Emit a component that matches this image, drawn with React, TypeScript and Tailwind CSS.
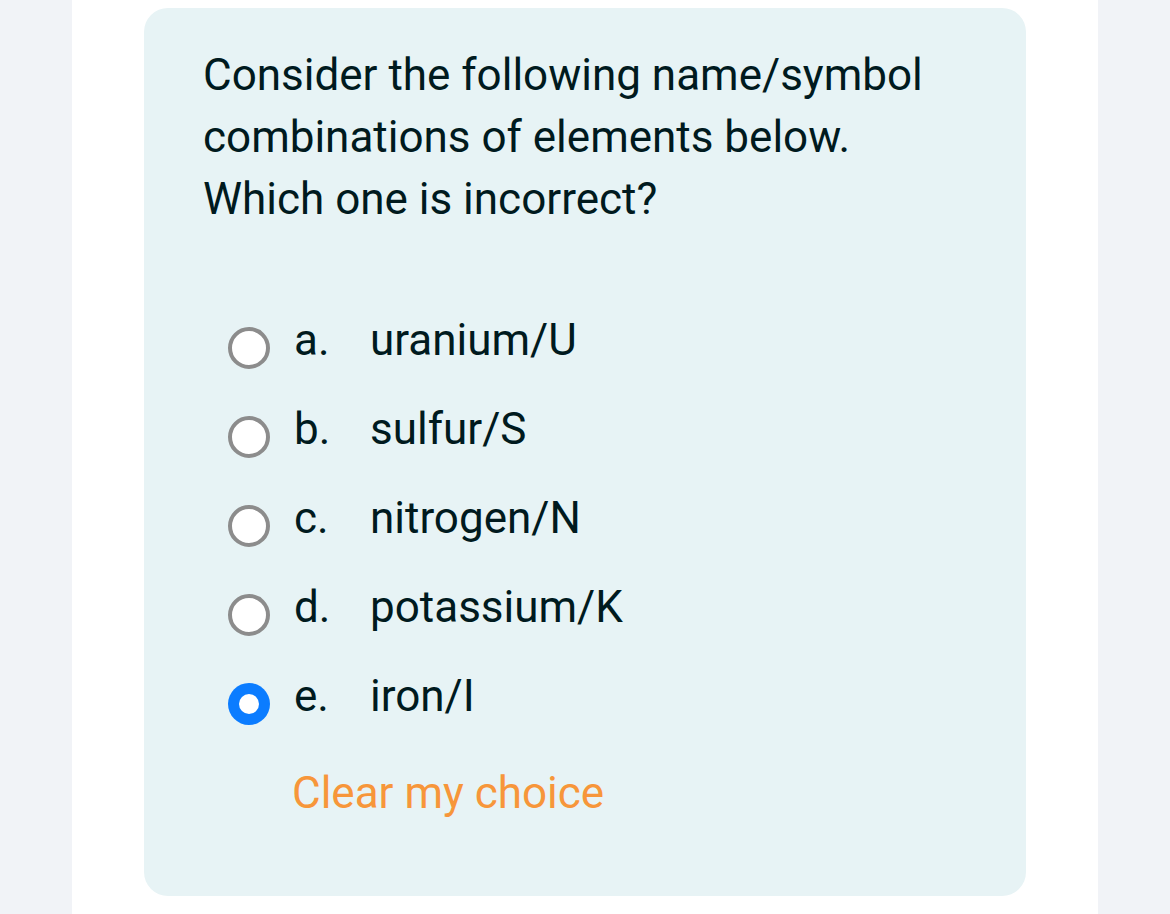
import React from "react";

const options = [
  { letter: "a.", label: "uranium/U" },
  { letter: "b.", label: "sulfur/S" },
  { letter: "c.", label: "nitrogen/N" },
  { letter: "d.", label: "potassium/K" },
  { letter: "e.", label: "iron/I" },
];

const Radio = ({ checked }: { checked: boolean }) =>
  checked ? (
    <span className="mt-[13px] flex h-[42px] w-[42px] shrink-0 items-center justify-center rounded-full bg-[#0b7cff]">
      <span className="h-[20px] w-[20px] rounded-full bg-white" />
    </span>
  ) : (
    <span className="mt-[13px] h-[42px] w-[42px] shrink-0 rounded-full border-4 border-[#8c8c8c] bg-white" />
  );

const App = () => {
  const selected = 4;

  return (
    <div
      className="flex min-h-screen justify-center bg-[#f1f3f7]"
      style={{ fontFamily: "Roboto, 'Noto Sans', sans-serif" }}
    >
      <div className="w-[1026px] bg-white px-[72px] pt-[8px]">
        <div className="rounded-[24px] bg-[#e7f3f5] pb-[77px] pl-[59px] pr-[59px] pt-[36px] text-[44px] text-[#001a1e]">
          <p className="leading-[62px]">
            Consider the following name/symbol combinations of elements below. Which one is incorrect?
          </p>

          <div className="mt-[84px] flex flex-col gap-[34px] pl-[25px]">
            {options.map((opt, i) => (
              <label key={opt.letter} className="flex items-start leading-[52px]">
                <Radio checked={i === selected} />
                <span className="ml-[24px] w-[76px]">{opt.letter}</span>
                <span>{opt.label}</span>
              </label>
            ))}
          </div>

          <div className="mt-[42px] pl-[89px] leading-[52px] text-[#f7963a]">
            Clear my choice
          </div>
        </div>
      </div>
    </div>
  );
};

export default App;
